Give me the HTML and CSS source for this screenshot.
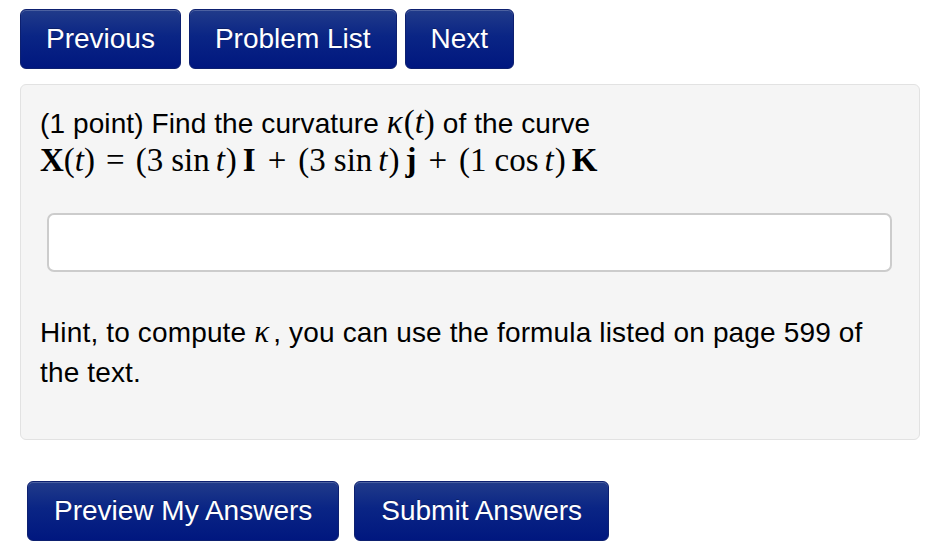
FILE: index.html
```html
<!DOCTYPE html>
<html>
<head>
<meta charset="utf-8">
<link rel="stylesheet" href="styles.css">
</head>
<body>
<div class="nav">
  <button class="btn">Previous</button>
  <button class="btn">Problem List</button>
  <button class="btn">Next</button>
</div>
<div class="panel">
  <div class="prompt">(1 point) Find the curvature <span class="m"><i class="kap">κ</i>(<i>t</i>)</span> of the curve</div>
  <div class="math"><b>X</b>(<i>t</i>)<span class="rel">=</span>(3<span class="op">sin</span><i class="tv">t</i>)<b class="bv">I</b><span class="bin">+</span>(3<span class="op">sin</span><i class="tv">t</i>)<b class="bv">j</b><span class="bin">+</span>(1<span class="op">cos</span><i class="tv">t</i>)<b class="bv">K</b></div>
  <div class="answer"><input class="field" type="text"></div>
  <p class="hint">Hint, to compute <i class="hk">κ</i>, you can use the formula listed on page 599 of the text.</p>
</div>
<div class="actions">
  <button class="btn">Preview My Answers</button>
  <button class="btn">Submit Answers</button>
</div>
</body>
</html>
```

FILE: styles.css
```css
html, body {
  margin: 0;
  background: #ffffff;
}
body {
  padding: 9px 11px 0 20px;
  font-family: "Liberation Sans", Arial, sans-serif;
  color: #000;
}
.nav {
  display: flex;
  gap: 8px;
}
.btn {
  height: 60px;
  padding: 0 25px;
  font-family: "Liberation Sans", Arial, sans-serif;
  font-size: 28px;
  color: #ffffff;
  background: linear-gradient(to bottom, #213b8a 0%, #0a2585 45%, #00177f 100%);
  border: 1px solid #0d2070;
  border-radius: 6px;
  box-shadow: inset 0 1px 0 rgba(255,255,255,0.2);
  text-shadow: 0 -1px 0 rgba(0,0,0,0.25);
}
.panel {
  margin-top: 15px;
  width: 900px;
  box-sizing: border-box;
  background: #f5f5f5;
  border: 1px solid #e2e2e2;
  border-radius: 6px;
  padding: 20px 19px 46px 19px;
}
.prompt {
  font-size: 28px;
  line-height: 37px;
  letter-spacing: 0.1px;
}
.m {
  font-family: "Liberation Serif", "Times New Roman", serif;
  font-size: 33px;
  line-height: 1;
  letter-spacing: 0;
}
.kap {
  margin-right: 1px;
}
.math {
  font-family: "Liberation Serif", "Times New Roman", serif;
  font-size: 33px;
  line-height: 37px;
  white-space: nowrap;
}
.rel {
  margin: 0 11px;
}
.bin {
  margin: 0 12px;
}
.op {
  margin: 0 6px 0 8px;
}
.tv {
  margin-right: 1px;
}
.bv {
  margin-left: 6px;
}
.answer {
  margin-top: 34px;
  padding-left: 7px;
}
.field {
  display: block;
  width: 845px;
  height: 59px;
  box-sizing: border-box;
  background: #fff;
  border: 2px solid #cccccc;
  border-radius: 7px;
}
.hint {
  margin: 41px 0 0 0;
  font-size: 28px;
  line-height: 40px;
  letter-spacing: 0.15px;
}
.hk {
  font-family: "Liberation Serif", "Times New Roman", serif;
  font-size: 31px;
  line-height: 1;
  margin-right: 4px;
}
.actions {
  display: flex;
  gap: 15px;
  margin-top: 41px;
  padding-left: 7px;
}
.actions .btn {
  padding: 0 26px;
}
```
